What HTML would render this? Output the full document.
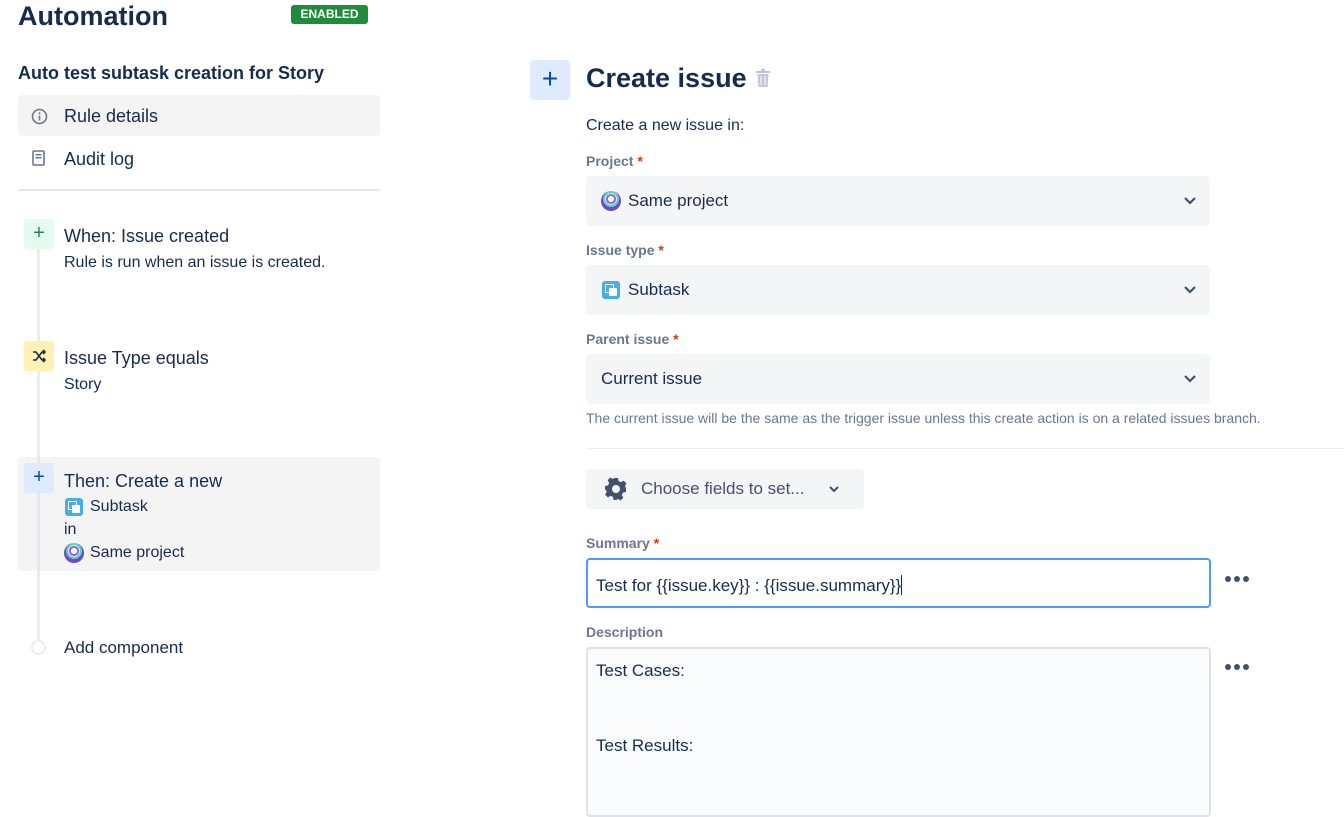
<!DOCTYPE html>
<html><head><meta charset="utf-8"><style>
*{margin:0;padding:0;box-sizing:border-box}
body{width:1344px;height:797px;overflow:hidden;background:#fff;font-family:"Liberation Sans",sans-serif;color:#172B4D;position:relative}
.a{position:absolute;white-space:nowrap}
.t18{font-size:18px}
.t16{font-size:16px}
.lbl{font-size:14px;font-weight:bold;color:#6B778C}
.lbl b{color:#DE350B;font-weight:bold}
.sel{position:absolute;left:586px;width:624px;height:50px;background:#F4F5F7;border-radius:4px}
.sel .tx{position:absolute;left:42px;top:15px;font-size:17px}
.chev{position:absolute;right:12px;top:17px}
.proj{display:inline-block;width:20px;height:20px;border-radius:50%;background:radial-gradient(circle at 50% 40%,#fff 0 3px,#8b6fd6 3px 5px,#e7e3f5 5px 6px,#5bcfc4 6px 8px,#6c4bc7 8px)}
.sub{display:inline-block;width:18px;height:18px;border-radius:3px;background:#4bade8;position:relative}
.sub:before{content:"";position:absolute;left:3px;top:3px;width:7px;height:7px;border:1.5px solid #fff;border-radius:1px}
.sub:after{content:"";position:absolute;left:7px;top:7px;width:8px;height:8px;background:#fff;border-radius:1px}
.box{position:absolute;left:24px;width:30px;height:30px;border-radius:3px}
.dots{position:absolute;left:1225px;width:30px;height:6px}
.dots i{float:left;width:6px;height:6px;border-radius:50%;background:#42526E;margin-right:3px}
</style></head><body>
<div class="a" style="left:18px;top:1px;font-size:27px;font-weight:bold">Automation</div>
<div class="a" style="left:291px;top:5px;width:77px;height:19px;background:#1F8B3B;border-radius:3px;color:#fff;font-size:12px;font-weight:bold;text-align:center;line-height:19px">ENABLED</div>
<div class="a" style="left:18px;top:63px;font-size:18px;font-weight:bold">Auto test subtask creation for Story</div>
<div class="a" style="left:18px;top:95px;width:362px;height:41px;background:#F4F4F4;border-radius:4px"></div>
<svg class="a" style="left:31px;top:108px" width="17" height="17" viewBox="0 0 17 17"><circle cx="8.5" cy="8.5" r="7" fill="none" stroke="#6B778C" stroke-width="1.6"/><rect x="7.7" y="7.5" width="1.6" height="5" fill="#6B778C"/><circle cx="8.5" cy="5.2" r="1" fill="#6B778C"/></svg>
<div class="a t18" style="left:64px;top:106px">Rule details</div>
<svg class="a" style="left:32px;top:150px" width="13" height="16" viewBox="0 0 13 16"><rect x="1" y="1" width="11" height="14" rx="1" fill="none" stroke="#6B778C" stroke-width="1.6"/><rect x="3.5" y="4" width="6" height="1.5" fill="#6B778C"/><rect x="3.5" y="7" width="6" height="1.5" fill="#6B778C"/></svg>
<div class="a t18" style="left:64px;top:149px">Audit log</div>
<div class="a" style="left:18px;top:189px;width:362px;height:2px;background:#E6E6EC"></div>
<div class="a" style="left:37px;top:245px;width:3px;height:395px;background:#EBECF0"></div>
<div class="box" style="top:219px;background:#E3FCEF;color:#1F845A;font-size:20px;text-align:center;line-height:28px">+</div>
<div class="a t18" style="left:64px;top:226px">When: Issue created</div>
<div class="a t16" style="left:64px;top:254px">Rule is run when an issue is created.</div>
<div class="box" style="top:341px;background:#FFF0B3"><svg width="30" height="30" viewBox="0 0 30 30"><path d="M9 11h3l6 8h3M9 19h3l6-8h3M19 9l2 2-2 2M19 17l2 2-2 2" fill="none" stroke="#172B4D" stroke-width="1.6"/></svg></div>
<div class="a t18" style="left:64px;top:348px">Issue Type equals</div>
<div class="a t16" style="left:64px;top:376px">Story</div>
<div class="a" style="left:18px;top:457px;width:362px;height:114px;background:#F4F4F4;border-radius:4px"></div>
<div class="a" style="left:37px;top:457px;width:3px;height:114px;background:#E6E6EC"></div>
<div class="box" style="top:463px;background:#DEEBFF;color:#0747A6;font-size:20px;text-align:center;line-height:28px">+</div>
<div class="a t18" style="left:64px;top:471px">Then: Create a new</div>
<div class="a" style="left:65px;top:498px"><span class="sub"></span></div>
<div class="a t16" style="left:90px;top:498px">Subtask</div>
<div class="a t16" style="left:64px;top:521px">in</div>
<div class="a" style="left:64px;top:543px"><span class="proj"></span></div>
<div class="a t16" style="left:90px;top:544px">Same project</div>
<div class="a" style="left:31px;top:640px;width:15px;height:15px;border-radius:50%;border:2px solid #EBECF0;background:#fff"></div>
<div class="a t16" style="left:64px;top:638px;font-size:17px">Add component</div>

<div class="a" style="left:530px;top:60px;width:40px;height:40px;background:#DEEBFF;border-radius:4px;color:#0747A6;font-size:28px;text-align:center;line-height:38px">+</div>
<div class="a" style="left:586px;top:63px;font-size:27px;font-weight:bold">Create issue</div>
<svg class="a" style="left:756px;top:69px" width="14" height="18" viewBox="0 0 14 18"><rect x="0" y="2" width="14" height="2" fill="#C1C7D0"/><rect x="5" y="0" width="4" height="3" fill="#C1C7D0"/><path d="M1.5 5h11l-1 13h-9z" fill="#C1C7D0"/><path d="M5 7v9M9 7v9" stroke="#fff" stroke-width="1"/></svg>
<div class="a t16" style="left:586px;top:117px">Create a new issue in:</div>
<div class="a lbl" style="left:586px;top:153px">Project<b> *</b></div>
<div class="sel" style="top:176px"><span class="a" style="left:15px;top:15px"><span class="proj"></span></span><span class="tx">Same project</span><svg class="chev" width="16" height="16" viewBox="0 0 16 16"><path d="M3 5l5 5 5-5" fill="none" stroke="#42526E" stroke-width="2.2"/></svg></div>
<div class="a lbl" style="left:586px;top:242px">Issue type<b> *</b></div>
<div class="sel" style="top:265px"><span class="a" style="left:16px;top:16px"><span class="sub"></span></span><span class="tx">Subtask</span><svg class="chev" width="16" height="16" viewBox="0 0 16 16"><path d="M3 5l5 5 5-5" fill="none" stroke="#42526E" stroke-width="2.2"/></svg></div>
<div class="a lbl" style="left:586px;top:331px">Parent issue<b> *</b></div>
<div class="sel" style="top:354px"><span class="tx" style="left:15px">Current issue</span><svg class="chev" width="16" height="16" viewBox="0 0 16 16"><path d="M3 5l5 5 5-5" fill="none" stroke="#42526E" stroke-width="2.2"/></svg></div>
<div class="a" style="left:586px;top:410px;font-size:14px;color:#6B778C">The current issue will be the same as the trigger issue unless this create action is on a related issues branch.</div>
<div class="a" style="left:586px;top:448px;width:758px;height:1px;background:#EBECF0"></div>
<div class="a" style="left:586px;top:469px;width:278px;height:40px;background:#F4F5F7;border-radius:4px"></div>
<svg class="a" style="left:604px;top:477px" width="24" height="24" viewBox="0 0 24 24"><path fill="#42526E" d="M10 1h4l.6 3 2.4 1.2 2.7-1.6 2.8 2.8-1.6 2.7L22 11v4l-3 .6-1.2 2.4 1.6 2.7-2.8 2.8-2.7-1.6L13 22.6 12.6 23h-3L9 20l-2.4-1.2-2.7 1.6-2.8-2.8 1.6-2.7L1.6 12.6 1 12V9l3-.6L5.2 6 3.6 3.3 6.4.5l2.7 1.6z"/><circle cx="12" cy="12" r="4" fill="#F4F5F7"/></svg>
<div class="a" style="left:641px;top:479px;font-size:17px;color:#42526E">Choose fields to set...</div>
<svg class="a" style="left:828px;top:483px" width="12" height="12" viewBox="0 0 12 12"><path d="M2 4l4 4 4-4" fill="none" stroke="#42526E" stroke-width="2"/></svg>
<div class="a lbl" style="left:586px;top:535px">Summary<b> *</b></div>
<div class="a" style="left:586px;top:558px;width:625px;height:50px;border:2px solid #4C9AFF;border-radius:4px;background:#fff"></div>
<div class="a" style="left:596px;top:575px;font-size:17px">Test for {{issue.key}} : {{issue.summary}}<span style="display:inline-block;width:1px;height:20px;background:#172B4D;vertical-align:-4px"></span></div>
<div class="dots" style="top:576px"><i></i><i></i><i></i></div>
<div class="a lbl" style="left:586px;top:624px">Description</div>
<div class="a" style="left:586px;top:647px;width:625px;height:170px;border:2px solid #DFE1E6;border-radius:4px;background:#FAFBFC"></div>
<div class="a" style="left:596px;top:661px;font-size:17px">Test Cases:</div>
<div class="a" style="left:596px;top:736px;font-size:17px">Test Results:</div>
<div class="dots" style="top:664px"><i></i><i></i><i></i></div>
</body></html>
